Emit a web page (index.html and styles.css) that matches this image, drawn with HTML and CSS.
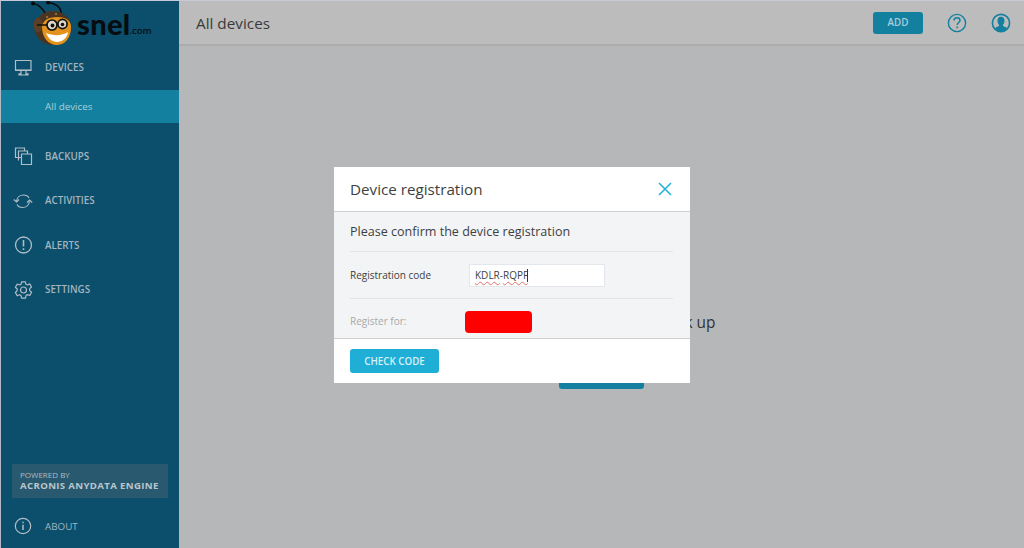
FILE: index.html
```html
<!DOCTYPE html>
<html lang="en">
<head>
<meta charset="utf-8">
<title>All devices</title>
<link rel="stylesheet" href="styles.css">
</head>
<body>
<div class="app">
  <aside class="sidebar">
    <div class="logo">
      <svg class="bee" width="44" height="46" viewBox="0 0 44 46">
        <path d="M15 12C12 7 8 3 3 2.5" fill="none" stroke="#0a0a0a" stroke-width="1.5"/>
        <path d="M31 12C31 6 25 2 18 1.5" fill="none" stroke="#0a0a0a" stroke-width="1.5"/>
        <circle cx="3" cy="2.5" r="1.9" fill="#0a0a0a"/><circle cx="18" cy="1.5" r="1.9" fill="#0a0a0a"/>
        <ellipse cx="23" cy="27" rx="18.5" ry="17" fill="#4a3420"/>
        <ellipse cx="8" cy="24" rx="4.5" ry="7.5" fill="#5c3f24"/>
        <circle cx="17" cy="16" r="1.2" fill="#8a6a42"/><circle cx="26" cy="13" r="1.2" fill="#8a6a42"/>
        <path d="M12 26C12 36 18 44 27 44C36 44 41.5 35 41 25C40.5 19 35 16 27 16C18 16 12 20 12 26Z" fill="#e3931c"/>
        <path d="M16 32C23 35 32 35 38 31C37.5 37 32 41 27 41C22 41 18 37 16 32Z" fill="#fff"/>
        <circle cx="22" cy="24" r="5" fill="#ddd6c6" stroke="#111" stroke-width="1.7"/>
        <circle cx="32.5" cy="23" r="4.6" fill="#ddd6c6" stroke="#111" stroke-width="1.7"/>
        <circle cx="22.5" cy="24.5" r="1.9" fill="#111"/><circle cx="32.5" cy="23.5" r="1.8" fill="#111"/>
        <path d="M7 24H17M27 23.5H28" stroke="#111" stroke-width="1.7"/>
      </svg>
      <span class="brand">snel</span><span class="brand-tld">.com</span>
    </div>
    <nav class="nav">
      <a class="nav-item">
        <svg class="nav-icon" viewBox="0 0 20 20"><path d="M2.5 3.5H18V13.5H2.5ZM8 13.5V16.8H6V18H15V16.8H13V13.5" fill="none" stroke="currentColor" stroke-width="1.2"/><path d="M2.5 13H18" stroke="currentColor" stroke-width="1.2"/></svg>
        <span>DEVICES</span>
      </a>
      <a class="sub-item">All devices</a>
      <a class="nav-item">
        <svg class="nav-icon" viewBox="0 0 20 20"><path d="M8 11.5H2.5V2H11.5V5M5.5 14.5V5H14.5V8M8.5 8H18.5V18.5H8.5Z" fill="none" stroke="currentColor" stroke-width="1.2"/></svg>
        <span>BACKUPS</span>
      </a>
      <a class="nav-item">
        <svg class="nav-icon" viewBox="0 0 20 20"><path d="M3.5 10C4 6.5 7 4 10.5 4C13 4 15 5.1 16 7M16.5 10.5C16 14.2 13 16.5 9.5 16.5C7 16.5 5 15.4 4 13.5" fill="none" stroke="currentColor" stroke-width="1.2"/><path d="M0.8 8.5L3.5 11L6 8.5M14 11.5L16.5 9L19.2 11.5" fill="none" stroke="currentColor" stroke-width="1.2"/></svg>
        <span>ACTIVITIES</span>
      </a>
      <a class="nav-item">
        <svg class="nav-icon" viewBox="0 0 20 20"><circle cx="10.5" cy="10" r="8" fill="none" stroke="currentColor" stroke-width="1.3"/><path d="M10.5 5V11.5M10.5 13.2V15" stroke="currentColor" stroke-width="1.6"/></svg>
        <span>ALERTS</span>
      </a>
      <a class="nav-item">
        <svg class="nav-icon" viewBox="0 0 20 20"><circle cx="10.5" cy="10" r="3" fill="none" stroke="currentColor" stroke-width="1.2"/><path d="M8.6 1.8H12.4L12.9 4.2L14.5 5L16.7 3.9L18.5 7L16.7 8.6V10.6L18.6 12.2L16.8 15.5L14.5 14.6L13 15.6L12.5 18.2H8.6L8 15.6L6.6 14.7L4.2 15.7L2.4 12.5L4.2 10.7V9L2.4 7.3L4.3 4L6.6 5L8.1 4.2Z" fill="none" stroke="currentColor" stroke-width="1.2" stroke-linejoin="round"/></svg>
        <span>SETTINGS</span>
      </a>
    </nav>
    <div class="powered">
      <div class="powered-small">POWERED BY</div>
      <div class="powered-big">ACRONIS ANYDATA ENGINE</div>
    </div>
    <a class="nav-item about">
      <svg class="nav-icon" viewBox="0 0 20 20"><circle cx="10" cy="10" r="7.7" fill="none" stroke="currentColor" stroke-width="1.2"/><path d="M10 8.8V14M10 5.8V7.2" stroke="currentColor" stroke-width="1.5"/></svg>
      <span>ABOUT</span>
    </a>
  </aside>
  <main class="main">
    <header class="topbar">
      <h1 class="page-title">All devices</h1>
      <div class="actions">
        <button class="add-btn">ADD</button>
        <svg class="top-icon" viewBox="0 0 20 20"><circle cx="10" cy="10" r="8.6" fill="none" stroke="currentColor" stroke-width="1.4"/><path d="M7 7.6C7 5.8 8.4 4.8 10 4.8C11.7 4.8 13 5.9 13 7.4C13 9.4 10.2 9.6 10.2 12M10.2 13.4V15.2" fill="none" stroke="currentColor" stroke-width="1.5"/></svg>
        <svg class="top-icon" viewBox="0 0 20 20"><circle cx="10" cy="10" r="8.6" fill="none" stroke="currentColor" stroke-width="1.6"/><path d="M10 3.8C12.5 3.8 13.7 5.8 13.5 8.2C13.4 9.8 12.8 11 12 11.7V13C13.5 13.8 15.4 14.2 16 15.2C14.5 17.1 12.4 18 10 18C7.6 18 5.5 17.1 4 15.2C4.6 14.2 6.5 13.8 8 13V11.7C7.2 11 6.6 9.8 6.5 8.2C6.3 5.8 7.5 3.8 10 3.8Z" fill="currentColor"/></svg>
      </div>
    </header>
    <section class="empty">
      <p class="empty-text">There are no devices to back up</p>
      <button class="empty-btn">ADD</button>
    </section>
  </main>
  <div class="modal-layer">
    <div class="modal">
      <div class="modal-head">
        <h2 class="modal-title">Device registration</h2>
        <svg class="close" viewBox="0 0 14 14"><path d="M1 1L13 13M13 1L1 13" fill="none" stroke="currentColor" stroke-width="1.5"/></svg>
      </div>
      <div class="modal-body">
        <div class="confirm">Please confirm the device registration</div>
        <div class="row row-code">
          <label class="row-label">Registration code</label>
          <div class="input"><span class="typed">KDLR</span><span>-</span><span class="typed">RQPF</span><span class="caret"></span></div>
        </div>
        <div class="row row-for">
          <label class="row-label muted">Register for:</label>
          <div class="redacted"></div>
        </div>
      </div>
      <div class="modal-foot">
        <button class="check-btn">CHECK CODE</button>
      </div>
    </div>
  </div>
</div>
</body>
</html>
```

FILE: styles.css
```css
* { box-sizing: border-box; }
html, body { margin: 0; height: 100%; }
body { font-family: "Open Sans", "Liberation Sans", sans-serif; overflow: hidden; }
.app {
  position: relative;
  display: flex;
  width: 1024px;
  height: 548px;
  border-top: 1px solid #c6c9d6;
  border-left: 1px solid #b4b7c4;
  background: #b6b7b8;
}
.sidebar {
  width: 178px;
  flex: none;
  display: flex;
  flex-direction: column;
  background: #0b4f6c;
  color: #a4b5bf;
}
.logo { height: 44px; display: flex; align-items: flex-start; padding-left: 29px; }
.bee { flex: none; }
.brand { font-family: "Lato", sans-serif; font-weight: 900; font-size: 29px; line-height: 29px; color: #050d12; margin: 8px 0 0 3px; letter-spacing: .3px; }
.brand-tld { font-size: 9.5px; line-height: 10px; color: #050d12; margin: 25px 0 0 -1px; font-weight: 600; }
.nav { display: flex; flex-direction: column; }
.nav-item {
  display: flex;
  align-items: center;
  height: 44.5px;
  padding-left: 12px;
  font-size: 9.8px;
  font-weight: 600;
}
.nav-icon { width: 20px; height: 20px; flex: none; margin-right: 12px; color: #b0bdc6; }
.sub-item {
  display: flex;
  align-items: center;
  height: 33px;
  margin-bottom: 11.6px;
  padding-left: 44px;
  background: #14809f;
  color: #a8cfdc;
  font-size: 9.8px;
}
.powered {
  margin: auto 11px 0;
  height: 34px;
  flex: none;
  padding: 6px 8px 0;
  background: #28596f;
  color: #aebcc4;
}
.powered-small { font-size: 8px; line-height: 9px; }
.powered-big { font-size: 9.6px; line-height: 13px; font-weight: 700; letter-spacing: .36px; color: #bac6cd; white-space: nowrap; }
.about { height: 44px; margin-top: 6px; font-weight: 400; flex: none; }
.main { flex: 1; display: flex; flex-direction: column; min-width: 0; }
.topbar {
  height: 45px;
  flex: none;
  display: flex;
  align-items: center;
  justify-content: space-between;
  padding: 0 13px 0 17px;
  background: #bcbcbc;
  border-bottom: 2px solid #acacac;
}
.page-title { margin: 0; font-size: 15.3px; font-weight: 400; color: #3a3a3a; }
.actions { display: flex; align-items: center; gap: 24px; }
.add-btn, .empty-btn {
  display: block;
  border: 0;
  border-radius: 3px;
  background: #14809f;
  color: #a8cfdc;
  font: 600 9.8px "Open Sans", sans-serif;
  padding: 0;
}
.add-btn { width: 50px; height: 22px; }
.top-icon { width: 20px; height: 20px; color: #14809f; }
.empty { flex: 1; display: flex; flex-direction: column; align-items: center; padding-top: 265px; }
.empty-text { margin: 0; font-size: 15.4px; line-height: 24px; color: #333; }
.empty-btn { width: 85px; height: 28px; margin-top: 26px; }
.modal-layer {
  position: absolute;
  inset: 0;
  display: flex;
  align-items: flex-start;
  justify-content: center;
  padding: 166px 1px 0 0;
}
.modal { width: 356px; height: 216px; display: flex; flex-direction: column; background: #fff; color: #3d3f42; }
.modal-head {
  height: 45px;
  flex: none;
  display: flex;
  align-items: center;
  justify-content: space-between;
  padding: 0 18px 0 16px;
  border-bottom: 1px solid #cfd0d2;
}
.modal-title { margin: 0; font-size: 15.2px; font-weight: 400; }
.close { width: 14px; height: 14px; color: #1fb0d8; }
.modal-body { flex: 1; min-height: 0; padding: 0 17px 0 16px; background: #f3f4f6; overflow: hidden; }
.confirm { height: 40px; padding-top: 9px; font-size: 12.55px; line-height: 22px; border-bottom: 1px solid #e3e4e6; }
.row { display: flex; align-items: center; }
.row-code { height: 47px; border-bottom: 1px solid #e3e4e6; }
.row-for { height: 39px; padding-top: 5px; }
.row-label { font-size: 10px; }
.row-code .row-label { width: 119px; }
.row-for .row-label { width: 115px; }
.muted { color: #a7a9ab; }
.input {
  width: 136px;
  height: 23px;
  display: flex;
  align-items: center;
  padding-left: 5px;
  background: #fff;
  border: 1px solid #e3e6ea;
  font-size: 10px;
}
.typed { text-decoration: underline wavy #e0706a 1px; text-underline-offset: 2px; }
.caret { width: 1px; height: 13px; background: #333; margin-left: -1px; }
.redacted { width: 67px; height: 22px; margin-top: 2px; border-radius: 4px; background: #ff0000; }
.modal-foot { height: 45px; flex: none; padding: 10px 16px 0; border-top: 1px solid #cfd0d2; }
.check-btn {
  display: block;
  width: 89px;
  height: 24px;
  border: 0;
  border-radius: 3px;
  background: #1eaed6;
  color: #d8f1f8;
  font: 600 9.8px "Open Sans", sans-serif;
  padding: 0;
}
```
